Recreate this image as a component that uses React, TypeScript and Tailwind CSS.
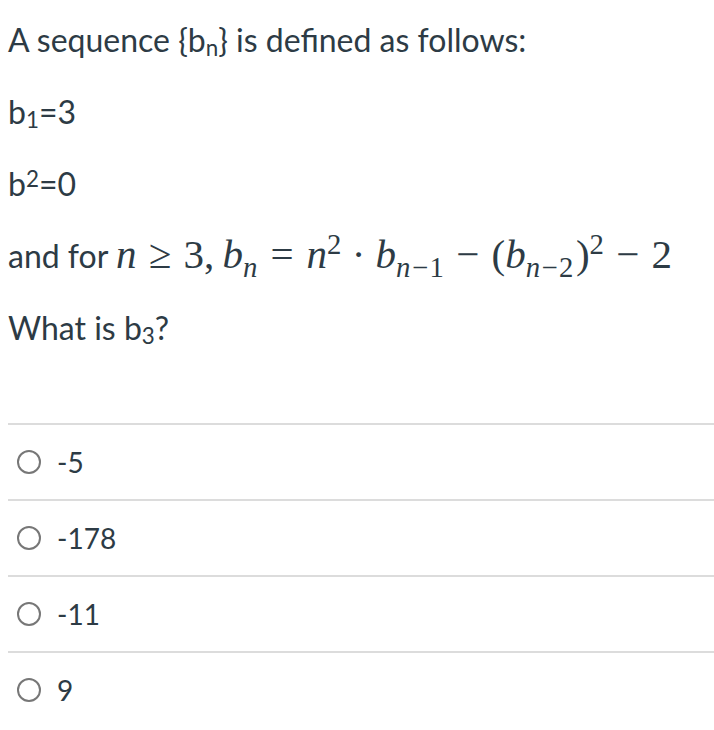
const answers = ["-5", "-178", "-11", "9"];

function Sub({ children }: { children: React.ReactNode }) {
  return <span className="text-[0.7em] align-[-0.3em] leading-[0] not-italic">{children}</span>;
}

function Sup({ children }: { children: React.ReactNode }) {
  return <span className="text-[0.7em] align-[0.5em] leading-[0] not-italic">{children}</span>;
}

function MathLine() {
  return (
    <span className="text-[41px] leading-[0] font-['Liberation_Serif',serif] whitespace-nowrap">
      <i>n</i>
      <span className="mx-[0.3em]">≥</span>
      <span>3,</span>
      <span className="ml-[0.2em]">
        <i>b</i>
        <Sub>
          <i>n</i>
        </Sub>
      </span>
      <span className="mx-[0.32em]">=</span>
      <i>n</i>
      <Sup>2</Sup>
      <span className="mx-[0.25em]">·</span>
      <i>b</i>
      <Sub>
        <i>n</i>
        <span className="mx-[0.05em]">−</span>1
      </Sub>
      <span className="mx-[0.3em]">−</span>
      <span>(</span>
      <i>b</i>
      <Sub>
        <i>n</i>
        <span className="mx-[0.05em]">−</span>2
      </Sub>
      <span className="ml-[0.06em]">)</span>
      <Sup>2</Sup>
      <span className="mx-[0.3em]">−</span>
      <span>2</span>
    </span>
  );
}

export default function App() {
  return (
    <div className="min-h-screen bg-white text-[#2d3b45] font-['Lato','Noto_Sans',sans-serif] pl-2 pt-4">
      <div className="text-[32px] leading-[48px] flex flex-col gap-6">
        <p>
          A sequence {"{"}b<span className="text-[0.7em] align-[-0.2em] leading-none">n</span>
          {"}"} is defined as follows:
        </p>
        <p>
          b<span className="text-[0.7em] align-[-0.2em] leading-none">1</span>=3
        </p>
        <p>
          b<span className="text-[0.7em] align-[0.4em] leading-none">2</span>=0
        </p>
        <p className="h-[48px]">
          and for <MathLine />
        </p>
        <p>
          What is b<span className="text-[0.7em] align-[-0.2em] leading-none">3</span>?
        </p>
      </div>

      <div className="mt-[71px]">
        {answers.map((a) => (
          <div key={a} className="border-t-2 border-[#dcdcdc] h-[76px] flex items-center">
            <span className="ml-[9px] w-[24px] h-[24px] rounded-full border-2 border-[#777] shrink-0" />
            <span className="ml-[16px] text-[28px]">{a}</span>
          </div>
        ))}
      </div>
    </div>
  );
}
